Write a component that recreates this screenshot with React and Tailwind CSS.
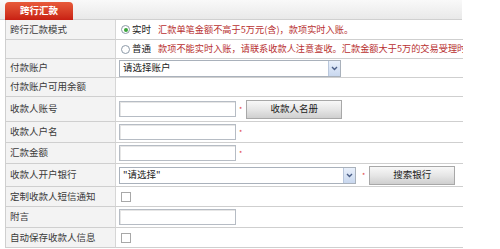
import React from "react";

const font = { fontFamily: '"Noto Sans CJK SC", "Noto Sans", sans-serif' };

function Label({ children, h }) {
  return (
    <div className={`${h} flex items-center pl-[4px] bg-[#f3f3f3] border-b border-[#cfcfcf] border-r border-r-[#d6d6d6] text-[9.5px] text-[#3a3a3a] leading-none whitespace-nowrap`}>
      {children}
    </div>
  );
}

function Value({ children, h }) {
  return (
    <div className={`${h} flex items-center pl-[3px] bg-white border-b border-[#cfcfcf] overflow-hidden whitespace-nowrap text-[9.5px] leading-none`}>
      {children}
    </div>
  );
}

function Input({ w = "w-[117px]" }) {
  return <div className={`${w} shrink-0 h-[16px] bg-white border border-[#b6bcc4] shadow-[inset_1px_1px_0_#e6e6e6]`} />;
}

function Star() {
  return <span className="shrink-0 ml-[3px] text-[#e04040] text-[7px] leading-none">*</span>;
}

function Arrow() {
  return (
    <div className="shrink-0 w-[12px] h-full flex items-center justify-center bg-gradient-to-b from-[#e9f0fb] to-[#c9d8ef] border-l border-[#b9c7dc]">
      <svg width="7" height="5" viewBox="0 0 7 5">
        <path d="M1 1 L3.5 3.5 L6 1" stroke="#4a5e86" strokeWidth="1.4" fill="none" />
      </svg>
    </div>
  );
}

function Select({ w, text }) {
  return (
    <div className={`${w} shrink-0 h-[17px] flex items-stretch bg-white border border-[#a9b1bb]`}>
      <div className="flex-1 flex items-center pl-[3px] text-[9.5px] text-[#222]">{text}</div>
      <Arrow />
    </div>
  );
}

function Button({ w, children }) {
  return (
    <div className={`${w} shrink-0 h-[19px] flex items-center justify-center bg-gradient-to-b from-[#f8f8f8] via-[#e6e6e6] to-[#cfcfcf] border border-[#a8a8a8] text-[9.5px] text-[#222]`}>
      {children}
    </div>
  );
}

function Check() {
  return <div className="shrink-0 ml-[2px] w-[10px] h-[10px] bg-white border border-[#a8a8a8]" />;
}

function Radio({ checked }) {
  return (
    <div className="shrink-0 ml-[2px] w-[9px] h-[9px] rounded-full border border-[#8d9aa8] bg-white flex items-center justify-center">
      {checked && <div className="w-[4px] h-[4px] rounded-full bg-[#3aa43a]" />}
    </div>
  );
}

export default function App() {
  return (
    <div className="w-[500px] h-[249px] bg-white overflow-hidden" style={font}>
      <div className="flex h-[20px] pl-[5px] w-[462px] bg-gradient-to-b from-[#f9f9f9] to-[#e9e9e9] border-b border-[#d0d0d0]">
        <div className="mt-[2px] w-[68px] h-[18px] rounded-t-[4px] bg-gradient-to-b from-[#e85a3a] to-[#c81e12] flex items-center justify-center text-white font-bold text-[9.5px] leading-none">
          跨行汇款
        </div>
      </div>
      <div className="ml-[5px] w-[457px] grid grid-cols-[110px_347px] border-l border-[#cfcfcf]">
        <Label h="h-[20px]">跨行汇款模式</Label>
        <Value h="h-[20px]">
          <Radio checked />
          <span className="shrink-0 ml-[2px] text-[#222]">实时</span>
          <span className="shrink-0 ml-[7px] text-[#b83030] text-[9.2px]">汇款单笔金额不高于5万元(含)，款项实时入账。</span>
        </Value>
        <Label h="h-[19px]"></Label>
        <Value h="h-[19px]">
          <Radio />
          <span className="shrink-0 ml-[2px] text-[#222]">普通</span>
          <span className="shrink-0 ml-[7px] text-[#b83030] text-[9.2px]">款项不能实时入账，请联系收款人注意查收。汇款金额大于5万的交易受理时间</span>
        </Value>
        <Label h="h-[19px]">付款账户</Label>
        <Value h="h-[19px]">
          <Select w="w-[222px]" text="请选择账户" />
        </Value>
        <Label h="h-[19px]">付款账户可用余额</Label>
        <Value h="h-[19px]"></Value>
        <Label h="h-[25px]">收款人账号</Label>
        <Value h="h-[25px]">
          <Input />
          <Star />
          <div className="shrink-0 ml-[4px]">
            <Button w="w-[96px]">收款人名册</Button>
          </div>
        </Value>
        <Label h="h-[21px]">收款人户名</Label>
        <Value h="h-[21px]">
          <Input />
          <Star />
        </Value>
        <Label h="h-[21px]">汇款金额</Label>
        <Value h="h-[21px]">
          <Input />
          <Star />
        </Value>
        <Label h="h-[23px]">收款人开户银行</Label>
        <Value h="h-[23px]">
          <Select w="w-[237px]" text={'"请选择"'} />
          <span className="shrink-0 ml-[6px] text-[#e04040] text-[7px]">*</span>
          <div className="shrink-0 ml-[4px]">
            <Button w="w-[86px]">搜索银行</Button>
          </div>
        </Value>
        <Label h="h-[20px]">定制收款人短信通知</Label>
        <Value h="h-[20px]">
          <Check />
        </Value>
        <Label h="h-[21px]">附言</Label>
        <Value h="h-[21px]">
          <Input />
        </Value>
        <Label h="h-[20px]">自动保存收款人信息</Label>
        <Value h="h-[20px]">
          <Check />
        </Value>
      </div>
    </div>
  );
}
